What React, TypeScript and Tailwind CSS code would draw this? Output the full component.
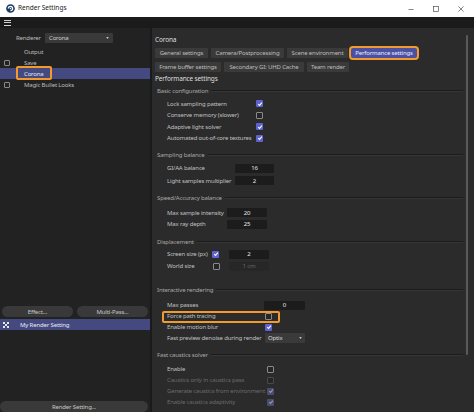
import React from "react";

const ORANGE = "border-[#f29a2e]";

function Check({ on = false, disabled = false }: { on?: boolean; disabled?: boolean }) {
	if (on) {
		return (
			<span
				className={`flex h-[7px] w-[7px] shrink-0 items-center justify-center rounded-[1px] ${
					disabled ? "bg-[#4a4c72]" : "bg-[#5e63cf]"
				}`}
			>
				<svg viewBox="0 0 10 10" className="h-[6px] w-[6px]">
					<path
						d="M2 5.3 L4.2 7.4 L8.2 2.7"
						fill="none"
						stroke={disabled ? "#9a9aae" : "#ffffff"}
						strokeWidth="1.7"
					/>
				</svg>
			</span>
		);
	}
	return (
		<span
			className={`block h-[7px] w-[7px] shrink-0 rounded-[1px] border bg-[#262626] ${
				disabled ? "border-[#4a4a4a]" : "border-[#8a8a8a]"
			}`}
		/>
	);
}

function Field({ value, w, disabled = false }: { value: string; w: string; disabled?: boolean }) {
	return (
		<div
			className={`flex h-[9px] items-center justify-center rounded-[1px] ${w} ${
				disabled ? "bg-[#272727] text-[#686868]" : "bg-[#1c1c1c] text-[#e6e6e6]"
			}`}
		>
			{value}
		</div>
	);
}

function Group({ title, className = "" }: { title: string; className?: string }) {
	return (
		<div className={`flex h-[10px] items-center pl-[5px] text-[#a8a8a8] ${className}`}>
			<span>{title}</span>
			<div className="ml-[3px] h-0 flex-1 border-t border-b border-t-[#1b1b1b] border-b-[#363636]" />
		</div>
	);
}

function Row({ h, children, className = "" }: { h: string; children: React.ReactNode; className?: string }) {
	return <div className={`relative flex items-center pl-[15px] ${h} ${className}`}>{children}</div>;
}

function Tab({ label, w, active = false }: { label: string; w: string; active?: boolean }) {
	return (
		<div
			className={`flex h-[10px] items-center justify-center whitespace-nowrap ${w} ${
				active
					? "rounded-[2px] bg-[#4a51a3] text-[#ececf8] ring-2 ring-[#f29a2e]"
					: "rounded-[1px] bg-[#3a3a3a] text-[#bdbdbd]"
			}`}
		>
			{label}
		</div>
	);
}

function TitleBar() {
	return (
		<div className="flex h-[17px] items-center bg-white text-[#1a1a1a]">
			<svg viewBox="0 0 10 10" className="ml-[6px] h-[9px] w-[9px]">
				<circle cx="5" cy="5" r="4.8" fill="#1d3a66" />
				<path d="M2.6 5 A2.4 2.4 0 1 1 5 7.4" fill="none" stroke="#ffffff" strokeWidth="1.3" />
				<circle cx="5" cy="5" r="0.9" fill="#ffffff" />
			</svg>
			<span className="ml-[3px] text-[6.5px] tracking-normal">Render Settings</span>
			<div className="ml-auto flex items-center">
				<svg viewBox="0 0 6 6" className="mr-[19px] h-[6px] w-[6px]">
					<path d="M0.5 3.5 H5.5" stroke="#333" strokeWidth="0.6" />
				</svg>
				<svg viewBox="0 0 6 6" className="mr-[19px] h-[6px] w-[6px]">
					<rect x="0.5" y="0.5" width="5" height="5" fill="none" stroke="#333" strokeWidth="0.6" />
				</svg>
				<svg viewBox="0 0 6 6" className="mr-[10px] h-[6px] w-[6px]">
					<path d="M0.4 0.4 L5.6 5.6 M5.6 0.4 L0.4 5.6" stroke="#333" strokeWidth="0.6" />
				</svg>
			</div>
		</div>
	);
}

function LeftPanel() {
	return (
		<div className="flex w-[150px] shrink-0 flex-col bg-[#222222]">
			<div className="h-[278px]">
				<div className="mt-[5px] flex h-[10px] items-center">
					<span className="w-[45px] pl-[16px] text-[#bdbdbd]">Renderer</span>
					<div className="flex h-[10px] w-[68px] items-center justify-between rounded-[1px] bg-[#393939] pl-[4px] pr-[4px] text-[#d0d0d0]">
						<span>Corona</span>
						<svg viewBox="0 0 4 3" className="h-[2px] w-[3px]">
							<path d="M0 0 H4 L2 3 Z" fill="#c8c8c8" />
						</svg>
					</div>
				</div>
				<div className="mt-[3px]">
					<div className="flex h-[11px] items-center pl-[24px] text-[#bdbdbd]">Output</div>
					<div className="flex h-[11px] items-center text-[#bdbdbd]">
						<span className="w-[24px] pl-[4px]">
							<span className="block h-[6px] w-[6px] rounded-[1px] border border-[#8a8a8a]" />
						</span>
						Save
					</div>
					<div className="relative flex h-[11px] items-center bg-[#444a80] pl-[24px] text-[#e8e8f0]">
						Corona
						<span className={`absolute left-[16px] top-[-2px] h-[14px] w-[36px] rounded-[2px] border-2 ${ORANGE}`} />
					</div>
					<div className="flex h-[11px] items-center text-[#bdbdbd]">
						<span className="w-[24px] pl-[4px]">
							<span className="block h-[6px] w-[6px] rounded-[1px] border border-[#8a8a8a]" />
						</span>
						Magic Bullet Looks
					</div>
				</div>
			</div>
			<div className="flex h-[11px] gap-[4px] px-[2px]">
				<div className="flex flex-1 items-center justify-center rounded-full bg-[#393939] text-[#c8c8c8]">Effect...</div>
				<div className="flex flex-1 items-center justify-center rounded-full bg-[#393939] text-[#c8c8c8]">Multi-Pass...</div>
			</div>
			<div className="mt-[2px] flex h-[11px] items-center bg-[#444a80] text-[#e8e8f0]">
				<svg viewBox="0 0 6 6" className="ml-[3px] h-[6px] w-[6px]">
					<rect x="0" y="0" width="2" height="2" fill="#e6e6e6" />
					<rect x="4" y="0" width="2" height="2" fill="#e6e6e6" />
					<rect x="0" y="4" width="2" height="2" fill="#e6e6e6" />
					<rect x="4" y="4" width="2" height="2" fill="#e6e6e6" />
					<rect x="2" y="2" width="2" height="2" fill="#e6e6e6" />
				</svg>
				<span className="ml-[11px]">My Render Setting</span>
			</div>
			<div className="flex-1" />
			<div className="flex h-[11px] w-[148px] items-center justify-center rounded-full bg-[#393939] text-[#c8c8c8]">
				Render Setting...
			</div>
		</div>
	);
}

function RightPanel() {
	return (
		<div className="flex flex-1">
			<div className="flex-1 pr-[1px]">
				<div className="mt-[7px] flex h-[10px] items-center pl-[3px] text-[6.5px] text-[#dedede]">Corona</div>
				<div className="mt-[3px] flex gap-[3px] pl-[3px]">
					<Tab label="General settings" w="w-[53px]" />
					<Tab label="Camera/Postprocessing" w="w-[73px]" />
					<Tab label="Scene environment" w="w-[61px]" />
					<Tab label="Performance settings" w="w-[66px]" active />
				</div>
				<div className="mt-[4px] flex gap-[3px] pl-[3px]">
					<Tab label="Frame buffer settings" w="w-[66px]" />
					<Tab label="Secondary GI: UHD Cache" w="w-[80px]" />
					<Tab label="Team render" w="w-[42px]" />
				</div>
				<div className="mt-[2px] flex h-[10px] items-center pl-[3px] text-[6.5px] text-[#dedede]">Performance settings</div>

				<Group title="Basic configuration" className="mt-[2px]" />
				<div className="mt-[2px]">
					<Row h="h-[11.5px]"><span className="w-[89px]">Lock sampling pattern</span><Check on /></Row>
					<Row h="h-[11.5px]"><span className="w-[89px]">Conserve memory (slower)</span><Check /></Row>
					<Row h="h-[11.5px]"><span className="w-[89px]">Adaptive light solver</span><Check on /></Row>
					<Row h="h-[11.5px]"><span className="w-[89px] whitespace-nowrap">Automated out-of-core textures</span><Check on /></Row>
				</div>

				<Group title="Sampling balance" className="mt-[6px]" />
				<div className="mt-[1.75px]">
					<Row h="h-[12.5px]"><span className="w-[68px]">GI/AA balance</span><Field value="16" w="w-[39px]" /></Row>
					<Row h="h-[12.5px]"><span className="w-[68px] whitespace-nowrap">Light samples multiplier</span><Field value="2" w="w-[39px]" /></Row>
				</div>

				<Group title="Speed/Accuracy balance" className="mt-[6.25px]" />
				<div className="mt-[4px]">
					<Row h="h-[11.5px]"><span className="w-[60px] whitespace-nowrap">Max sample intensity</span><Field value="20" w="w-[40px]" /></Row>
					<Row h="h-[11.5px]"><span className="w-[60px]">Max ray depth</span><Field value="25" w="w-[40px]" /></Row>
				</div>

				<Group title="Displacement" className="mt-[7px]" />
				<div className="mt-[1px]">
					<Row h="h-[12px]"><span className="w-[45px] whitespace-nowrap">Screen size (px)</span><Check on /><span className="w-[10px]" /><Field value="2" w="w-[40px]" /></Row>
					<Row h="h-[12px]"><span className="w-[46px]">World size</span><Check /><span className="w-[9px]" /><Field value="1 cm" w="w-[40px]" disabled /></Row>
				</div>

				<Group title="Interactive rendering" className="mt-[13px]" />
				<div className="mt-[4.5px]">
					<Row h="h-[11px]"><span className="w-[97px]">Max passes</span><Field value="0" w="w-[41px]" /></Row>
					<Row h="h-[11px]">
						<span className="w-[98px]">Force path tracing</span>
						<Check />
						<span className={`absolute left-[10px] top-0 h-[12px] w-[118px] rounded-[2px] border-2 ${ORANGE}`} />
					</Row>
					<Row h="h-[11px]"><span className="w-[98px]">Enable motion blur</span><Check on /></Row>
					<Row h="h-[11px]">
						<span className="w-[98px] whitespace-nowrap">Fast preview denoise during render</span>
						<div className="flex h-[10px] w-[40px] items-center justify-between rounded-[1px] bg-[#3a3a3a] px-[3px] text-[#dcdcdc]">
							<span>Optix</span>
							<svg viewBox="0 0 4 3" className="h-[2px] w-[3px]">
								<path d="M0 0 H4 L2 3 Z" fill="#c8c8c8" />
							</svg>
						</div>
					</Row>
				</div>

				<Group title="Fast caustics solver" className="mt-[6.5px]" />
				<div className="mt-[3.5px]">
					<Row h="h-[11px]"><span className="w-[100px]">Enable</span><Check /></Row>
					<Row h="h-[11px]" className="text-[#6a6a6a]"><span className="w-[100px] whitespace-nowrap">Caustics only in caustics pass</span><Check disabled /></Row>
					<Row h="h-[11px]" className="text-[#6a6a6a]"><span className="w-[100px] whitespace-nowrap">Generate caustics from environment</span><Check on disabled /></Row>
					<Row h="h-[11px]" className="text-[#6a6a6a]"><span className="w-[100px] whitespace-nowrap">Enable caustics adaptivity</span><Check on disabled /></Row>
				</div>
			</div>
			<div className="w-[10px] shrink-0">
				<div className="ml-[2px] mt-[7px] h-[320px] w-[2px] rounded-full bg-[#5a5a5a]" />
			</div>
		</div>
	);
}

export default function App() {
	return (
		<div className="flex h-[412px] w-[474px] flex-col overflow-hidden bg-[#2b2b2b] font-['Noto_Sans',sans-serif] text-[6px] leading-none tracking-[-0.15px] text-[#c0c0c0]">
			<TitleBar />
			<div className="flex h-[11px] items-center bg-[#1b1b1b] pl-[4px]">
				<div className="flex flex-col gap-[1.5px]">
					<span className="block h-[1px] w-[7px] bg-[#d4d4d4]" />
					<span className="block h-[1px] w-[7px] bg-[#d4d4d4]" />
					<span className="block h-[1px] w-[7px] bg-[#d4d4d4]" />
				</div>
			</div>
			<div className="flex min-h-0 flex-1">
				<LeftPanel />
				<div className="w-[2px] shrink-0 bg-[#1a1a1a]" />
				<RightPanel />
			</div>
		</div>
	);
}
